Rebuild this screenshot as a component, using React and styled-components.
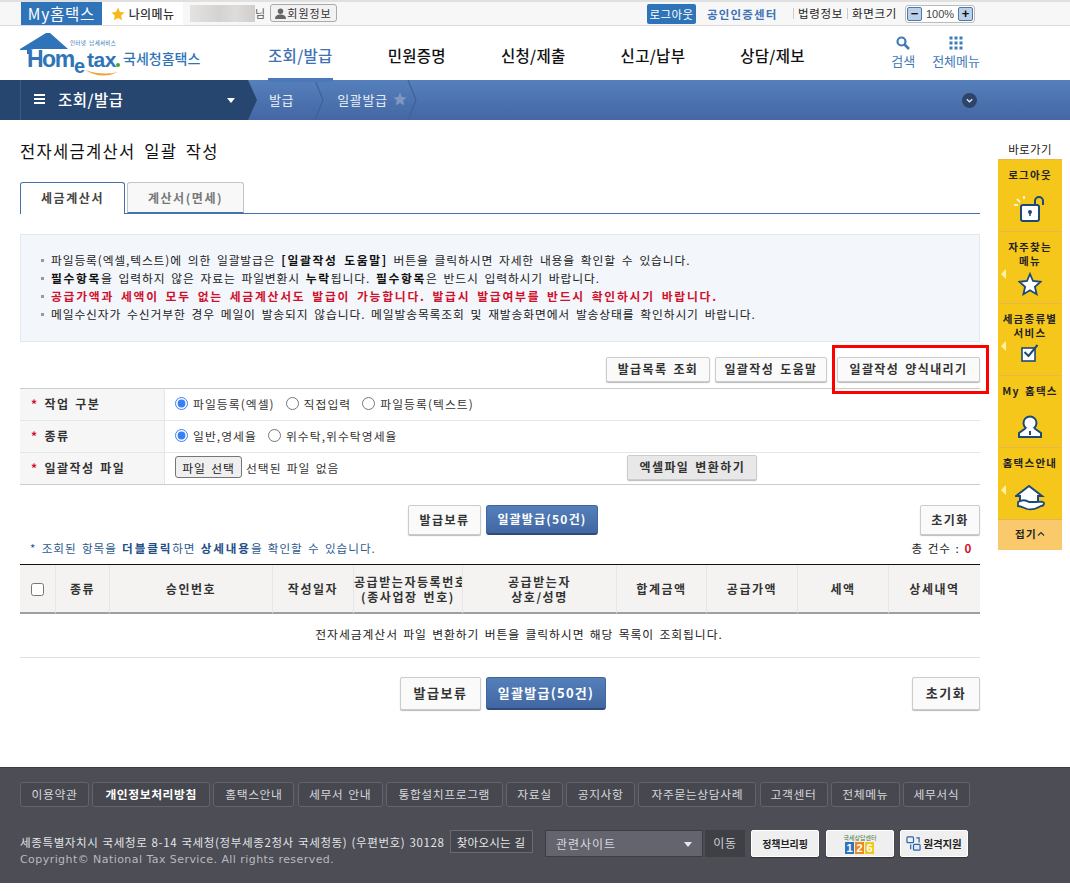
import React from "react";
import styled, { createGlobalStyle } from "styled-components";

const Global = createGlobalStyle`
  html, body { margin: 0; padding: 0; background: #fff; }
  body {
    font-family: "Noto Sans CJK KR", "Liberation Sans", sans-serif;
    font-size: 12px;
    color: #222;
    letter-spacing: .08em;
    word-spacing: .14em;
  }
  * { box-sizing: border-box; }
  button { font-family: inherit; letter-spacing: inherit; word-spacing: inherit; cursor: pointer; }
`;

const Page = styled.div`width: 1070px;`;

/* top utility bar */
const TopBar = styled.div`
  height: 26px;
  border-top: 2px solid #e0e0e0;
  border-bottom: 1px solid #dcdcdc;
  background: #f7f7f7;
  padding-left: 21px;
  display: flex;
  align-items: stretch;
`;
const MyTab = styled.div`
  width: 81px;
  background: #2f74b9;
  color: #fff;
  font-size: 15.5px;
  line-height: 22px;
  text-align: center;
  letter-spacing: .05em;
`;
const MenuTab = styled.div`
  width: 81px;
  background: #fff;
  font-size: 12px;
  font-weight: 500;
  display: flex;
  align-items: center;
  justify-content: center;
  gap: 4px;
  letter-spacing: .03em;
  color: #333;
`;
const Blur = styled.div`
  width: 65px;
  height: 17px;
  margin: 3px 0 0 7px;
  background: linear-gradient(90deg, #e4e3e1, #d4d3d1 45%, #dddcda 70%, #cfcecc);
`;
const Nim = styled.span`
  font-size: 11px;
  line-height: 23px;
  color: #555;
  width: 15px;
  letter-spacing: 0;
`;
const MemberBtn = styled.button`
  width: 67px;
  height: 18px;
  margin-top: 2px;
  padding: 0;
  border: 1px solid #aaa;
  border-radius: 3px;
  background: #f2f2f2;
  font-size: 11px;
  color: #333;
  display: flex;
  align-items: center;
  justify-content: center;
  gap: 1px;
`;
const TopRight = styled.div`
  margin-left: auto;
  display: flex;
  align-items: center;
  padding-right: 95px;
  height: 23px;
`;
const LogoutBtn = styled.button`
  width: 49px;
  height: 20px;
  padding: 0;
  border: 0;
  border-radius: 2px;
  background: #2f74b9;
  color: #fff;
  font-size: 11.5px;
  letter-spacing: .04em;
`;
const CertLink = styled.span`
  margin-left: 11px;
  width: 86px;
  font-size: 11.5px;
  font-weight: 700;
  color: #3d72b4;
  letter-spacing: .1em;
  white-space: nowrap;
`;
const TopLink = styled.span`
  font-size: 11.5px;
  color: #222;
  padding-left: 4px;
  border-left: 1px solid #ccc;
  line-height: 11px;
  width: ${(p) => p.$w}px;
  white-space: nowrap;
  letter-spacing: .06em;
`;
const ZoomBox = styled.div`
  margin-left: 8px;
  width: 70px;
  height: 18px;
  border: 1px solid #bbb;
  border-radius: 3px;
  background: #fff;
  display: flex;
  align-items: center;
  justify-content: space-between;
  padding: 0 1px;
  font-size: 11px;
  color: #444;
  font-family: "Liberation Sans", sans-serif;
  letter-spacing: 0;
`;
const ZoomBtn = styled.span`
  width: 15px;
  height: 14px;
  border: 1px solid #4e78ad;
  border-radius: 2px;
  background: #bcd0e8;
  color: #111;
  font-size: 13px;
  font-weight: 700;
  line-height: 11px;
  text-align: center;
`;

/* header */
const Header = styled.header`
  height: 54px;
  display: flex;
  padding: 0 90px 0 20px;
`;
const LogoWrap = styled.div`
  width: 248px;
  padding-top: 7px;
`;
const Nav = styled.nav`
  display: flex;
  gap: 55px;
`;
const NavItem = styled.a`
  height: 56px;
  font-size: 15.5px;
  font-weight: 500;
  line-height: 58px;
  letter-spacing: .02em;
  color: ${(p) => (p.$active ? "#3f72b4" : "#111")};
  border-bottom: 4px solid ${(p) => (p.$active ? "#4a78b8" : "transparent")};
  position: relative;
  z-index: 1;
  white-space: nowrap;
`;
const Tools = styled.div`
  margin-left: auto;
  display: flex;
  gap: 17px;
  padding-top: 10px;
`;
const Tool = styled.div`
  display: flex;
  flex-direction: column;
  align-items: center;
  gap: 2px;
  color: #3f7ab9;
  font-size: 13px;
  letter-spacing: 0;
  line-height: 18px;
  white-space: nowrap;
`;

/* breadcrumb */
const Crumbs = styled.div`
  height: 40px;
  background: linear-gradient(#5580bb, #4467a4);
  display: flex;
  align-items: center;
  color: #fff;
  position: relative;
`;
const CrumbHome = styled.div`
  width: 257px;
  height: 40px;
  background: #27466f;
  clip-path: polygon(0 0, 248px 0, 257px 50%, 248px 100%, 0 100%);
  padding: 0 0 2px 34px;
  display: flex;
  align-items: center;
  font-size: 15.5px;
  font-weight: 500;
  letter-spacing: .03em;
  position: relative;
  &::before {
    content: "";
    position: absolute;
    left: 20px;
    top: 0;
    bottom: 0;
    width: 1px;
    background: #375b8b;
  }
`;
const Burger = styled.span`
  width: 11px;
  height: 10px;
  margin-right: 13px;
  border-top: 2px solid #fff;
  border-bottom: 2px solid #fff;
  position: relative;
  &::after {
    content: "";
    position: absolute;
    left: 0;
    right: 0;
    top: 2px;
    height: 2px;
    background: #fff;
  }
`;
const Caret = styled.span`
  position: absolute;
  left: 227px;
  top: 18px;
  border: 4px solid transparent;
  border-top: 5px solid #fff;
`;
const CrumbItem = styled.div`
  margin-left: ${(p) => p.$ml}px;
  padding-bottom: 2px;
  font-size: 13px;
  letter-spacing: .05em;
  color: #e6edf7;
  display: flex;
  align-items: center;
  gap: 5px;
`;
const CrumbArrow = styled.svg`
  width: 10px;
  height: 40px;
  margin-left: ${(p) => p.$ml}px;
  flex: none;
`;
const Circle = styled.span`
  margin-left: auto;
  margin-right: 93px;
  width: 15px;
  height: 15px;
  border-radius: 50%;
  background: #2b4468;
  display: flex;
  align-items: center;
  justify-content: center;
`;

/* main */
const Main = styled.div`
  display: flex;
  padding-left: 20px;
  gap: 18px;
`;
const Content = styled.main`
  width: 960px;
`;
const Title = styled.h1`
  margin: 0;
  height: 62px;
  padding-top: 19px;
  font-size: 16.5px;
  line-height: 24px;
  font-weight: 400;
  color: #111;
  letter-spacing: .08em;
  word-spacing: .22em;
`;
const Tabs = styled.div`
  height: 32px;
  display: flex;
  gap: 2px;
  border-bottom: 1px solid #4470b0;
`;
const Tab = styled.div`
  height: ${(p) => (p.$active ? 32 : 31)}px;
  width: ${(p) => p.$w}px;
  border: 1px solid ${(p) => (p.$active ? "#4470b0" : "#c4c4c4")};
  border-bottom: ${(p) => (p.$active ? "0" : "1px solid #4470b0")};
  border-radius: 3px 3px 0 0;
  background: ${(p) => (p.$active ? "#fff" : "#f8f8f8")};
  text-align: center;
  font-size: 12px;
  font-weight: 700;
  line-height: 29px;
  color: ${(p) => (p.$active ? "#444" : "#777")};
  letter-spacing: .13em;
`;
const Info = styled.div`
  margin-top: 20px;
  height: 108px;
  padding: 16px 20px;
  border: 1px solid #e3e8f0;
  background: #f3f6fb;
  font-size: 11.8px;
  letter-spacing: .072em;
  word-spacing: .2em;
`;
const InfoLine = styled.div`
  height: 18px;
  line-height: 18px;
  padding-left: 10px;
  position: relative;
  white-space: nowrap;
  color: ${(p) => (p.$red ? "#d0112b" : "#222")};
  font-weight: ${(p) => (p.$red ? 700 : 400)};
  letter-spacing: ${(p) => (p.$red ? ".15em" : "inherit")};
  &::before {
    content: "";
    position: absolute;
    left: 0;
    top: 8px;
    width: 3px;
    height: 3px;
    background: #999;
  }
  b { color: #111; letter-spacing: .14em; }
`;
const BtnRow = styled.div`
  margin-top: 15px;
  height: 25px;
  display: flex;
  justify-content: flex-end;
`;
const Btn = styled.button`
  height: ${(p) => p.$h || 25}px;
  width: ${(p) => p.$w}px;
  padding: 0 0 2px;
  margin-left: ${(p) => p.$ml || 0}px;
  border: 1px solid #ccc;
  border-radius: 2px;
  background: ${(p) => (p.$grey ? "#e8e8e8" : "#fafafa")};
  box-shadow: 0 1px 1px #bbb;
  font-size: ${(p) => p.$fs || 12}px;
  font-weight: 700;
  color: #333;
  white-space: nowrap;
  letter-spacing: .12em;
`;
const PrimaryBtn = styled.button`
  height: ${(p) => p.$h}px;
  width: ${(p) => p.$w}px;
  padding: 0 0 2px;
  margin-left: 5px;
  border: 1px solid #41659f;
  border-bottom: 2px solid #2e4a78;
  border-radius: 3px;
  background: linear-gradient(#5480ba, #4267a3);
  font-size: ${(p) => p.$fs || 12}px;
  font-weight: 700;
  color: #fff;
  white-space: nowrap;
  letter-spacing: .1em;
`;
const Marked = styled.div`
  position: relative;
  margin-left: 10px;
  &::after {
    content: "";
    position: absolute;
    left: -5px;
    right: -9px;
    top: -12px;
    bottom: -12px;
    border: 3px solid #f00;
    pointer-events: none;
  }
`;
const Form = styled.div`
  margin-top: 6px;
  border-top: 1px solid #ccc;
  border-bottom: 1px solid #ccc;
`;
const FormRow = styled.div`
  height: 32px;
  display: flex;
  &:first-child { height: 31px; }
  & + & { border-top: 1px solid #e6e6e6; }
`;
const FormLabel = styled.div`
  width: 145px;
  flex: none;
  background: #f6f6f6;
  border-right: 1px solid #e6e6e6;
  padding-left: 11px;
  display: flex;
  align-items: center;
  gap: 6px;
  font-size: 12px;
  font-weight: 700;
  color: #333;
  padding-bottom: 3px;
  letter-spacing: .12em;
  span { color: #d0112b; }
`;
const FormValue = styled.div`
  flex: 1;
  display: flex;
  align-items: center;
  padding: 0 0 3px 10px;
  font-size: 11.8px;
  color: #333;
  position: relative;
`;
const RadioLabel = styled.label`
  display: flex;
  align-items: center;
  gap: 5px;
  margin-right: 11px;
  white-space: nowrap;
  letter-spacing: .09em;
  input { margin: 0; width: 13px; height: 13px; accent-color: #3b7ff5; }
`;
const FileBtn = styled.button`
  width: 67px;
  height: 22px;
  padding: 0;
  border: 1px solid #767676;
  border-radius: 3px;
  background: #efefef;
  font-size: 11.8px;
  color: #222;
  margin-right: 4px;
`;
const ConvertSlot = styled.div`
  margin-left: 288px;
`;
const Actions = styled.div`
  margin-top: ${(p) => p.$mt}px;
  display: flex;
  justify-content: center;
  position: relative;
  padding-left: 6px;
`;
const ResetSlot = styled.div`
  position: absolute;
  right: 0;
  top: 0;
`;
const NoteRow = styled.div`
  margin-top: 5px;
  height: 24px;
  padding: 0 8px 0 10px;
  display: flex;
  justify-content: space-between;
  font-size: 11.6px;
  line-height: 16px;
`;
const Note = styled.span`
  color: #2d5a8e;
  letter-spacing: .085em;
  b { color: #1f4f86; letter-spacing: .16em; }
`;
const Count = styled.span`
  color: #222;
  letter-spacing: .06em;
  b { color: #d0112b; }
`;
const Table = styled.table`
  width: 960px;
  table-layout: fixed;
  border-collapse: separate;
  border-spacing: 0;
  border-top: 1px solid #111;
  margin: 0;
`;
const Th = styled.th`
  height: 49px;
  padding: 0;
  background: #f4f3f1;
  border-bottom: 2px solid #a0a0a0;
  border-right: ${(p) => (p.$last ? "0" : "1px solid #e6e6e6")};
  font-size: 12px;
  line-height: 15px;
  color: #333;
  white-space: nowrap;
  overflow: hidden;
  letter-spacing: .13em;
  input { width: 13px; height: 13px; margin: 3px 0 0; }
`;
const Td = styled.td`
  height: 44px;
  padding: 0 0 5px 38px;
  text-align: center;
  font-size: 11.8px;
  color: #222;
  border-bottom: 1px solid #e0e0e0;
`;

/* quick rail */
const Rail = styled.aside`
  width: 64px;
  padding-top: 20px;
  flex: none;
`;
const RailTitle = styled.div`
  height: 19px;
  text-align: center;
  font-size: 11.5px;
  line-height: 18px;
  color: #222;
  letter-spacing: .03em;
  white-space: nowrap;
`;
const RailItem = styled.div`
  height: ${(p) => (p.$fold ? 31 : 72)}px;
  background: ${(p) => (p.$fold ? "#f9c96b" : "#f5c71a")};
  border-top: 1px solid ${(p) => (p.$fold ? "#e5b450" : "#e8b750")};
  text-align: center;
  font-size: 10.5px;
  font-weight: 700;
  line-height: 14px;
  color: #222;
  letter-spacing: .12em;
  padding-top: ${(p) => (p.$fold ? 7 : 8)}px;
  position: relative;
  display: flex;
  flex-direction: ${(p) => (p.$fold ? "row" : "column")};
  justify-content: ${(p) => (p.$fold ? "center" : "flex-start")};
  align-items: ${(p) => (p.$fold ? "flex-start" : "center")};
  white-space: nowrap;
  svg {
    margin-top: ${(p) => (p.$fold ? "3px" : "auto")};
    margin-bottom: ${(p) => p.$ib || 8}px;
  }
  &::before {
    content: "";
    display: ${(p) => (p.$arrow ? "block" : "none")};
    position: absolute;
    left: 3px;
    top: 37px;
    border: 5px solid transparent;
    border-left: 0;
    border-right: 5px solid #fdf3a8;
  }
`;

/* footer */
const Footer = styled.footer`
  margin-top: 57px;
  height: 116px;
  background: #4c4d55;
  border-top: 1px solid #3c3c42;
  padding: 14px 20px 0;
`;
const FootLinks = styled.div`
  display: flex;
  gap: 3.2px;
`;
const FootLink = styled.a`
  width: ${(p) => p.$w}px;
  height: 25px;
  border: 1px solid #62636b;
  border-radius: 3px;
  background: #47484f;
  text-align: center;
  font-size: 11.8px;
  line-height: 22px;
  color: ${(p) => (p.$strong ? "#fff" : "#d6d7db")};
  font-weight: ${(p) => (p.$strong ? 700 : 400)};
  letter-spacing: .05em;
  white-space: nowrap;
`;
const FootBottom = styled.div`
  margin-top: 23px;
  display: flex;
`;
const FootLeft = styled.div`
  width: 525px;
  flex: none;
`;
const Address = styled.div`
  display: flex;
  align-items: center;
  height: 23px;
  font-size: 11.5px;
  color: #e2e3e6;
  letter-spacing: .055em;
  word-spacing: .08em;
  white-space: nowrap;
`;
const WayBtn = styled.button`
  margin-left: 5px;
  width: 83px;
  height: 23px;
  padding: 0;
  border: 1px solid #6a6b72;
  background: #45464d;
  font-size: 11.5px;
  color: #e8e8ea;
  letter-spacing: .02em;
`;
const Copy = styled.div`
  font-family: "DejaVu Sans", sans-serif;
  font-size: 11px;
  line-height: 14px;
  color: #b8babf;
  letter-spacing: .04em;
  word-spacing: 0;
  white-space: nowrap;
`;
const Select = styled.div`
  width: 158px;
  height: 27px;
  border: 1px solid #3d3e44;
  background: #63646e;
  color: #d8d9dd;
  font-size: 12px;
  line-height: 26px;
  padding-left: 10px;
  position: relative;
  &::after {
    content: "";
    position: absolute;
    right: 10px;
    top: 11px;
    border: 4px solid transparent;
    border-top: 5px solid #e8e8ea;
  }
`;
const Go = styled.div`
  width: 40px;
  height: 27px;
  margin-left: 2px;
  background: #3f4046;
  color: #cfd0d4;
  text-align: center;
  font-size: 12px;
  line-height: 25px;
  letter-spacing: .05em;
`;
const Banner = styled.div`
  width: 68px;
  height: 27px;
  margin-left: ${(p) => p.$ml}px;
  background: #efefef;
  border: 1px solid #fff;
  border-radius: 2px;
  box-shadow: 0 1px 1px #333;
  display: flex;
  align-items: center;
  justify-content: center;
  flex-direction: ${(p) => (p.$col ? "column" : "row")};
  gap: ${(p) => (p.$col ? 0 : 2)}px;
  font-size: ${(p) => p.$fs || 10.5}px;
  font-weight: 700;
  color: #222;
  letter-spacing: -.01em;
  white-space: nowrap;
`;
const Tiny = styled.span`
  font-size: 6px;
  line-height: 8px;
  color: #4a7a3a;
  font-weight: 400;
  letter-spacing: 0;
`;
const Digits = styled.span`
  display: flex;
  font-family: "Liberation Sans", sans-serif;
  font-size: 11px;
  line-height: 12px;
`;
const Digit = styled.span`
  width: 9px;
  text-align: center;
  color: #fff;
  background: ${(p) => p.$c};
  margin-right: 1px;
  letter-spacing: 0;
`;

const NAVY = "#1c4a78";
const LOGO_FONT = "Liberation Sans, sans-serif";

const Logo = () => (
  <svg width="182" height="46" viewBox="0 0 182 46">
    <path d="M0 16 L26 0 H30 L48 16 H14 L10 17 V21 H7 V17 H0Z" fill="#2f74b9" />
    <text x="7" y="34" fontFamily={LOGO_FONT} fontWeight="700" fontSize="23" letterSpacing="-1.5" fill="#2f74b9">Hom</text>
    <text x="54" y="40" fontFamily={LOGO_FONT} fontWeight="700" fontSize="20" fill="#2f74b9">e</text>
    <text x="67" y="34" fontFamily={LOGO_FONT} fontWeight="700" fontSize="21" letterSpacing="-.5" fill="#2f74b9">tax</text>
    <circle cx="98" cy="32" r="2" fill="#4aa52e" />
    <path d="M65 37 Q82 47 98 39 Q82 43 65 37Z" fill="#f0a23a" />
    <text x="50" y="12" fontSize="5.500" fontFamily="Noto Sans CJK KR, sans-serif" fill="#2f74b9" letterSpacing=".3">인터넷 납세서비스</text>
    <text x="103" y="31" fontSize="14" fontWeight="500" fontFamily="Noto Sans CJK KR, sans-serif" fill="#2f74b9" letterSpacing="0">국세청홈택스</text>
  </svg>
);

const Arrow = ({ ml, color = "#3f6196" }) => (
  <CrumbArrow $ml={ml} viewBox="0 0 10 40">
    <path d="M1 0 L9 20 L1 40" fill="none" stroke={color} strokeWidth="1.200" />
  </CrumbArrow>
);

const LockIcon = () => (
  <svg width="34" height="28" viewBox="0 0 34 28">
    <rect x="8" y="10" width="18" height="16" rx="2" fill="#fff" stroke={NAVY} strokeWidth="2" />
    <circle cx="17" cy="17" r="2" fill={NAVY} />
    <path d="M17 17v4" stroke={NAVY} strokeWidth="1.500" />
    <path d="M22 10V6a4 4 0 0 1 8 0v4" fill="none" stroke={NAVY} strokeWidth="2" />
    <path d="M1 10h4M4 4l3 3M11 1v3" stroke="#fff" strokeWidth="1.500" />
  </svg>
);
const StarIcon = () => (
  <svg width="24" height="24" viewBox="0 0 24 24">
    <path d="M12 2l3 7 7.500 .8-5.600 5 1.700 7.400L12 18.300 5.400 22.200l1.700-7.400-5.600-5L9 9z" fill="#fff" stroke={NAVY} strokeWidth="1.800" />
  </svg>
);
const CheckIcon = () => (
  <svg width="20" height="20" viewBox="0 0 20 20">
    <rect x="2" y="5" width="13" height="13" fill="#fff" stroke={NAVY} strokeWidth="1.600" />
    <path d="M4.500 9l4 4 9-11" fill="none" stroke={NAVY} strokeWidth="2" />
  </svg>
);
const PersonIcon = () => (
  <svg width="26" height="24" viewBox="0 0 26 24">
    <circle cx="13" cy="8" r="6.500" fill="#fff" stroke={NAVY} strokeWidth="2" />
    <path d="M9 13l-7 5v4h22v-4l-7-5" fill="#fff" stroke={NAVY} strokeWidth="2" />
    <path d="M13 16v4" stroke={NAVY} strokeWidth="2" />
  </svg>
);
const HouseIcon = () => (
  <svg width="30" height="26" viewBox="0 0 30 26">
    <path d="M1 11L14 1l13 10h-4v6H5v-6z" fill="#fff" stroke={NAVY} strokeWidth="2" />
    <path d="M3 17c5-3 8-2 11 0h7c3 0 8-1 8 1s-1 3-3 3c-5 3-10 4-14 3-3-1-6-3-9-3z" fill="#fff" stroke={NAVY} strokeWidth="1.800" />
  </svg>
);

const radios1 = ["파일등록(엑셀)", "직접입력", "파일등록(텍스트)"];
const radios2 = ["일반,영세율", "위수탁,위수탁영세율"];
const cols = [36, 54, 163, 81, 109, 154, 90, 91, 91, 91];
const heads = ["합계금액", "공급가액", "세액", "상세내역"];
const links = [
  ["이용약관", 69], ["개인정보처리방침", 118, true], ["홈택스안내", 81], ["세무서 안내", 85],
  ["통합설치프로그램", 117], ["자료실", 57], ["공지사항", 69], ["자주묻는상담사례", 118],
  ["고객센터", 68], ["전체메뉴", 69], ["세무서식", 67],
];

export default function App() {
  return (
    <Page>
      <Global />
      <TopBar>
        <MyTab>My홈택스</MyTab>
        <MenuTab>
          <svg width="14" height="14" viewBox="0 0 24 24"><path d="M12 1l3.400 7.400 8 .9-6 5.400 1.700 8L12 18.700 4.900 22.700l1.700-8-6-5.400 8-.9z" fill="#f5b91e" /></svg>
          나의메뉴
        </MenuTab>
        <Blur />
        <Nim>님</Nim>
        <MemberBtn>
          <svg width="11" height="11" viewBox="0 0 12 12"><circle cx="6" cy="3.500" r="3" fill="#666" /><path d="M0 12c0-4 3-5 6-5s6 1 6 5z" fill="#666" /></svg>
          회원정보
        </MemberBtn>
        <TopRight>
          <LogoutBtn>로그아웃</LogoutBtn>
          <CertLink>공인인증센터</CertLink>
          <TopLink $w={54}>법령정보</TopLink>
          <TopLink $w={50}>화면크기</TopLink>
          <ZoomBox>
            <ZoomBtn>−</ZoomBtn>
            100%
            <ZoomBtn>+</ZoomBtn>
          </ZoomBox>
        </TopRight>
      </TopBar>

      <Header>
        <LogoWrap><Logo /></LogoWrap>
        <Nav>
          <NavItem $active>조회/발급</NavItem>
          <NavItem>민원증명</NavItem>
          <NavItem>신청/제출</NavItem>
          <NavItem>신고/납부</NavItem>
          <NavItem>상담/제보</NavItem>
        </Nav>
        <Tools>
          <Tool>
            <svg width="14" height="14" viewBox="0 0 14 14"><circle cx="5.500" cy="5.500" r="4" fill="none" stroke="#3f7ab9" strokeWidth="2.200" /><path d="M8.500 8.500L13 13" stroke="#3f7ab9" strokeWidth="2.600" /></svg>
            검색
          </Tool>
          <Tool>
            <svg width="14" height="14" viewBox="0 0 14 14" fill="#3f7ab9">
              {[0, 5, 10].flatMap((y) => [0, 5, 10].map((x) => <rect key={`${x}-${y}`} x={x + 0.5} y={y + 0.5} width="3" height="3" />))}
            </svg>
            전체메뉴
          </Tool>
        </Tools>
      </Header>

      <Crumbs>
        <CrumbHome>
          <Burger />
          조회/발급
          <Caret />
        </CrumbHome>
        <CrumbItem $ml={12}>발급</CrumbItem>
        <Arrow ml={20} />
        <CrumbItem $ml={13}>
          일괄발급
          <svg width="14" height="14" viewBox="0 0 24 24"><path d="M12 1l3.400 7.400 8 .9-6 5.400 1.700 8L12 18.700 4.900 22.700l1.700-8-6-5.400 8-.9z" fill="#7f97bd" /></svg>
        </CrumbItem>
        <Arrow ml={0} />
        <Circle>
          <svg width="9" height="9" viewBox="0 0 10 10"><path d="M2 3.500l3 3 3-3" fill="none" stroke="#dfe6f0" strokeWidth="1.500" /></svg>
        </Circle>
      </Crumbs>

      <Main>
        <Content>
          <Title>전자세금계산서 일괄 작성</Title>
          <Tabs>
            <Tab $active $w={105}>세금계산서</Tab>
            <Tab $w={117}>계산서(면세)</Tab>
          </Tabs>
          <Info>
            <InfoLine>파일등록(엑셀,텍스트)에 의한 일괄발급은 <b>[일괄작성 도움말]</b> 버튼을 클릭하시면 자세한 내용을 확인할 수 있습니다.</InfoLine>
            <InfoLine><b>필수항목</b>을 입력하지 않은 자료는 파일변환시 <b>누락</b>됩니다. <b>필수항목</b>은 반드시 입력하시기 바랍니다.</InfoLine>
            <InfoLine $red>공급가액과 세액이 모두 없는 세금계산서도 발급이 가능합니다. 발급시 발급여부를 반드시 확인하시기 바랍니다.</InfoLine>
            <InfoLine>메일수신자가 수신거부한 경우 메일이 발송되지 않습니다. 메일발송목록조회 및 재발송화면에서 발송상태를 확인하시기 바랍니다.</InfoLine>
          </Info>
          <BtnRow>
            <Btn $w={104}>발급목록 조회</Btn>
            <Btn $w={112} $ml={5}>일괄작성 도움말</Btn>
            <Marked><Btn $w={143}>일괄작성 양식내리기</Btn></Marked>
          </BtnRow>
          <Form>
            <FormRow>
              <FormLabel><span>*</span>작업 구분</FormLabel>
              <FormValue>
                {radios1.map((r, i) => (
                  <RadioLabel key={r}><input type="radio" name="a" defaultChecked={i === 0} />{r}</RadioLabel>
                ))}
              </FormValue>
            </FormRow>
            <FormRow>
              <FormLabel><span>*</span>종류</FormLabel>
              <FormValue>
                {radios2.map((r, i) => (
                  <RadioLabel key={r}><input type="radio" name="b" defaultChecked={i === 0} />{r}</RadioLabel>
                ))}
              </FormValue>
            </FormRow>
            <FormRow>
              <FormLabel><span>*</span>일괄작성 파일</FormLabel>
              <FormValue>
                <FileBtn>파일 선택</FileBtn>
                선택된 파일 없음
                <ConvertSlot><Btn $w={130} $grey>엑셀파일 변환하기</Btn></ConvertSlot>
              </FormValue>
            </FormRow>
          </Form>
          <Actions $mt={20}>
            <Btn $w={73} $h={30}>발급보류</Btn>
            <PrimaryBtn $w={112} $h={30}>일괄발급(50건)</PrimaryBtn>
            <ResetSlot><Btn $w={60} $h={30}>초기화</Btn></ResetSlot>
          </Actions>
          <NoteRow>
            <Note>* 조회된 항목을 <b>더블클릭</b>하면 <b>상세내용</b>을 확인할 수 있습니다.</Note>
            <Count>총 건수 : <b>0</b></Count>
          </NoteRow>
          <Table>
            <colgroup>{cols.map((c, i) => <col key={i} width={c} />)}</colgroup>
            <thead>
              <tr>
                <Th><input type="checkbox" /></Th>
                <Th>종류</Th>
                <Th>승인번호</Th>
                <Th>작성일자</Th>
                <Th>공급받는자등록번호<br />(종사업장 번호)</Th>
                <Th>공급받는자<br />상호/성명</Th>
                {heads.map((h, i) => <Th key={h} $last={i === 3}>{h}</Th>)}
              </tr>
            </thead>
            <tbody>
              <tr><Td colSpan={10}>전자세금계산서 파일 변환하기 버튼을 클릭하시면 해당 목록이 조회됩니다.</Td></tr>
            </tbody>
          </Table>
          <Actions $mt={19}>
            <Btn $w={81} $h={33} $fs={13}>발급보류</Btn>
            <PrimaryBtn $w={120} $h={33} $fs={13}>일괄발급(50건)</PrimaryBtn>
            <ResetSlot><Btn $w={68} $h={33} $fs={13}>초기화</Btn></ResetSlot>
          </Actions>
        </Content>
        <Rail>
          <RailTitle>바로가기</RailTitle>
          <RailItem><span>로그아웃</span><LockIcon /></RailItem>
          <RailItem $arrow $ib={7}><span>자주찾는<br />메뉴</span><StarIcon /></RailItem>
          <RailItem $arrow $ib={12}><span>세금종류별<br />서비스</span><CheckIcon /></RailItem>
          <RailItem><span>My 홈택스</span><PersonIcon /></RailItem>
          <RailItem $arrow><span>홈택스안내</span><HouseIcon /></RailItem>
          <RailItem $fold>
            <span>접기</span>
            <svg width="8" height="8" viewBox="0 0 8 8"><path d="M1 5.500l3-3 3 3" fill="none" stroke="#333" strokeWidth="1.200" /></svg>
          </RailItem>
        </Rail>
      </Main>

      <Footer>
        <FootLinks>
          {links.map(([t, w, s]) => <FootLink key={t} $w={w} $strong={s}>{t}</FootLink>)}
        </FootLinks>
        <FootBottom>
          <FootLeft>
            <Address>
              세종특별자치시 국세청로 8-14 국세청(정부세종2청사 국세청동) (우편번호) 30128
              <WayBtn>찾아오시는 길</WayBtn>
            </Address>
            <Copy>Copyright© National Tax Service. All rights reserved.</Copy>
          </FootLeft>
          <Select>관련사이트</Select>
          <Go>이동</Go>
          <Banner $ml={6} $fs={10}>정책브리핑</Banner>
          <Banner $ml={7} $col>
            <Tiny>국세상담센터</Tiny>
            <Digits><Digit $c="#2f74b9">1</Digit><Digit $c="#e98a1c">2</Digit><Digit $c="#f2c81e">6</Digit></Digits>
          </Banner>
          <Banner $ml={6}>
            <svg width="15" height="15" viewBox="0 0 16 16" fill="none" stroke="#2f62b0" strokeWidth="1.300"><rect x="1" y="1" width="7" height="6" rx="1" /><rect x="8" y="9" width="7" height="6" rx="1" fill="#dfe8f5" /><path d="M11 2h3v5M5 9v5h0" /></svg>
            원격지원
          </Banner>
        </FootBottom>
      </Footer>
    </Page>
  );
}
